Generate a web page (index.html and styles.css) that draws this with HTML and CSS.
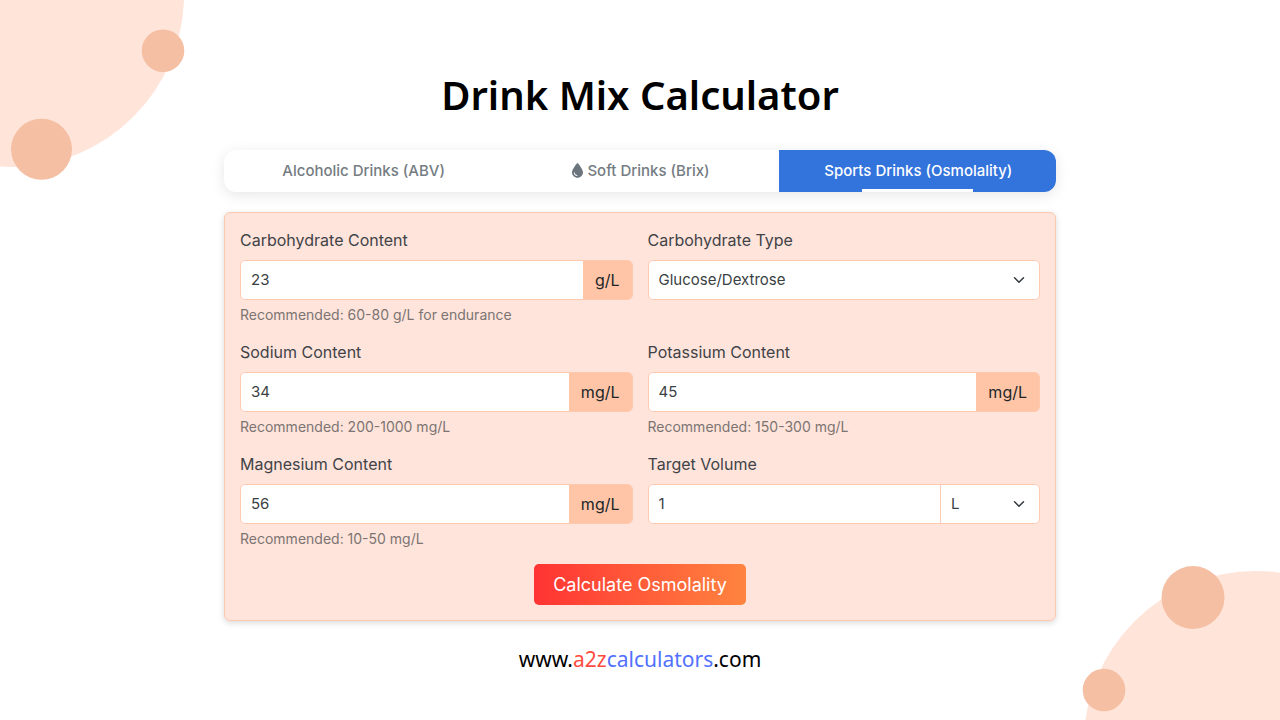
FILE: index.html
```html
<!DOCTYPE html>
<html lang="en">
<head>
    <meta charset="UTF-8">
    <meta name="viewport" content="width=device-width, initial-scale=1.0">
    <title>Drink Mix Calculator</title>
    <link rel="stylesheet" href="styles.css">
</head>
<body>
    <svg class="corner corner-top" width="190" height="190" viewBox="0 0 190 190" aria-hidden="true">
        <circle class="blob" cx="12" cy="-5" r="172"/>
        <circle class="dot" cx="163" cy="50.7" r="21.3"/>
        <circle class="dot" cx="41.5" cy="149.2" r="30.5"/>
    </svg>
    <svg class="corner corner-bottom" width="200" height="160" viewBox="0 0 200 160" aria-hidden="true">
        <circle class="blob" cx="176" cy="183" r="172"/>
        <circle class="dot" cx="113" cy="37.5" r="31.5"/>
        <circle class="dot" cx="24" cy="130" r="21.3"/>
    </svg>

    <main class="container">
        <h1>Drink Mix Calculator</h1>

        <nav class="tabs">
            <button type="button" class="tab">Alcoholic Drinks (ABV)</button>
            <button type="button" class="tab">
                <svg class="drop" viewBox="0 0 384 512" aria-hidden="true"><path fill="currentColor" d="M192 512C86 512 0 426 0 320C0 228.800 130.200 57.700 166.600 11.700C172.600 4.200 181.500 0 191.100 0h1.800c9.600 0 18.500 4.200 24.500 11.700C253.800 57.700 384 228.800 384 320c0 106-86 192-192 192zM96 336c0-8.800-7.200-16-16-16s-16 7.200-16 16c0 61.900 50.100 112 112 112c8.800 0 16-7.200 16-16s-7.200-16-16-16c-44.200 0-80-35.800-80-80z"/></svg>
                Soft Drinks (Brix)
            </button>
            <button type="button" class="tab active">Sports Drinks (Osmolality)</button>
        </nav>

        <form class="card">
            <div class="fields">
                <div class="field">
                    <label for="carbs">Carbohydrate Content</label>
                    <div class="input-group">
                        <input type="text" id="carbs" value="23">
                        <span class="unit">g/L</span>
                    </div>
                    <small>Recommended: 60-80 g/L for endurance</small>
                </div>
                <div class="field">
                    <label for="carbType">Carbohydrate Type</label>
                    <div class="input-group">
                        <div class="select-wrap">
                            <select id="carbType">
                                <option>Glucose/Dextrose</option>
                            </select>
                            <svg class="chevron" viewBox="0 0 16 16" aria-hidden="true"><path d="m2 5 6 6 6-6"/></svg>
                        </div>
                    </div>
                </div>
                <div class="field">
                    <label for="sodium">Sodium Content</label>
                    <div class="input-group">
                        <input type="text" id="sodium" value="34">
                        <span class="unit">mg/L</span>
                    </div>
                    <small>Recommended: 200-1000 mg/L</small>
                </div>
                <div class="field">
                    <label for="potassium">Potassium Content</label>
                    <div class="input-group">
                        <input type="text" id="potassium" value="45">
                        <span class="unit">mg/L</span>
                    </div>
                    <small>Recommended: 150-300 mg/L</small>
                </div>
                <div class="field">
                    <label for="magnesium">Magnesium Content</label>
                    <div class="input-group">
                        <input type="text" id="magnesium" value="56">
                        <span class="unit">mg/L</span>
                    </div>
                    <small>Recommended: 10-50 mg/L</small>
                </div>
                <div class="field">
                    <label for="volume">Target Volume</label>
                    <div class="input-group">
                        <input type="text" id="volume" value="1">
                        <div class="select-wrap select-unit">
                            <select id="volumeUnit" aria-label="Volume unit">
                                <option>L</option>
                            </select>
                            <svg class="chevron" viewBox="0 0 16 16" aria-hidden="true"><path d="m2 5 6 6 6-6"/></svg>
                        </div>
                    </div>
                </div>
            </div>
            <button type="button" class="calculate">Calculate Osmolality</button>
        </form>

        <footer>www.<span class="red">a2z</span><span class="blue">calculators</span>.com</footer>
    </main>
</body>
</html>
```
FILE: styles.css
```css
* {
    box-sizing: border-box;
}
body {
    position: relative;
    min-height: 100vh;
    margin: 0;
    padding: 65px 0 30px;
    overflow-x: hidden;
    background: #fff;
    color: #3f4347;
    font-family: Inter, "Liberation Sans", sans-serif;
    font-size: 16px;
}
button, input, select {
    font-family: inherit;
}

/* corner decoration */
.corner {
    position: absolute;
    z-index: -1;
}
.corner-top {
    top: 0;
    left: 0;
}
.corner-bottom {
    right: 0;
    bottom: 0;
}
.blob {
    fill: #ffe4d9;
}
.dot {
    fill: #f5bfa3;
}

.container {
    display: flex;
    flex-direction: column;
    width: 65%;
    min-width: 600px;
    margin: 0 auto;
}
h1 {
    margin: 0 0 25px;
    color: #000;
    font-family: "Noto Sans", sans-serif;
    font-size: 40px;
    font-weight: 600;
    line-height: 60px;
    text-align: center;
}

/* tabs */
.tabs {
    display: grid;
    grid-template-columns: repeat(3, 1fr);
    margin-bottom: 20px;
    overflow: hidden;
    border-radius: 12px;
    background: #fff;
    box-shadow: 0 3px 14px rgba(0, 0, 0, 0.1);
}
.tab {
    position: relative;
    display: flex;
    align-items: center;
    justify-content: center;
    gap: 4px;
    height: 42px;
    padding: 0 8px 2px 10px;
    border: none;
    background: none;
    color: #757c82;
    font-size: 15px;
    font-weight: 500;
    cursor: pointer;
}
.tab.active {
    background: #3273dc;
    color: #fff;
}
.tab.active::after {
    content: "";
    position: absolute;
    bottom: 0;
    left: 30%;
    width: 40%;
    height: 3px;
    background: #fff;
}
.drop {
    width: 11px;
    height: 15px;
    color: #6c757d;
}

/* form */
.card {
    padding: 15px;
    border: 1px solid #ffc9b0;
    border-radius: 6px;
    background: #ffe4db;
    box-shadow: 0 2px 6px rgba(0, 0, 0, 0.15);
}
.fields {
    display: grid;
    grid-template-columns: 1fr 1fr;
    gap: 15px;
}
.field label {
    display: block;
    margin-bottom: 8px;
    line-height: 24px;
}
.field small {
    display: block;
    margin-top: 5px;
    color: #7c7472;
    font-size: 14px;
    line-height: 20px;
}
.input-group {
    display: flex;
    height: 40px;
    overflow: hidden;
    border: 1px solid #ffc9b0;
    border-radius: 5px;
    background: #fff;
}
.input-group input {
    flex: 1;
    min-width: 0;
    padding: 0 10px 2px;
    border: none;
    background: none;
    color: #3a3f44;
    font-size: 15px;
}
.unit {
    padding: 0 12px;
    background: #ffc5a6;
    color: #212529;
    line-height: 38px;
}
.select-wrap {
    position: relative;
    flex: 1;
}
.select-unit {
    flex: 0 0 99px;
    border-left: 1px solid #ffc9b0;
}
.select-wrap select {
    width: 100%;
    height: 100%;
    padding: 0 32px 2px 10px;
    border: none;
    background: none;
    color: #3a3f44;
    font-size: 15px;
    appearance: none;
}
.chevron {
    position: absolute;
    top: 13px;
    right: 14px;
    width: 12px;
    height: 12px;
    fill: none;
    stroke: #343a40;
    stroke-width: 2;
    stroke-linecap: round;
    stroke-linejoin: round;
    pointer-events: none;
}
.calculate {
    display: block;
    height: 41px;
    margin: 15px auto 0;
    padding: 0 19px;
    border: none;
    border-radius: 5px;
    background: linear-gradient(90deg, #ff3333, #ff843f);
    color: #fff;
    font-size: 18px;
    cursor: pointer;
}

footer {
    margin-top: 23px;
    color: #000;
    font-family: "Noto Sans", sans-serif;
    font-size: 21px;
    line-height: 30px;
    text-align: center;
}
.red {
    color: #ff4b3e;
}
.blue {
    color: #5271ff;
}
```
